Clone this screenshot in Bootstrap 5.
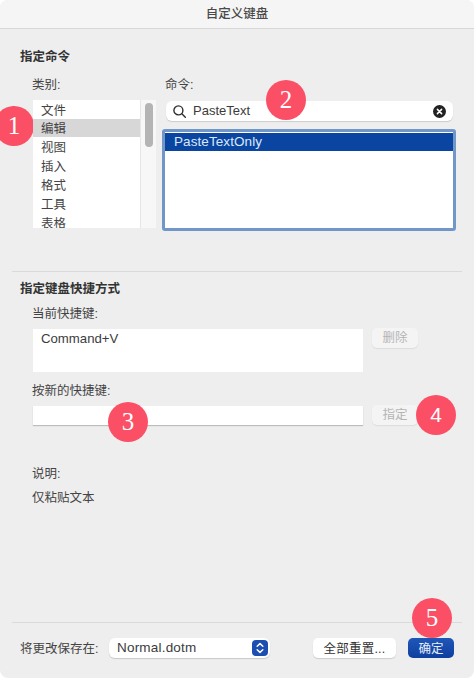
<!DOCTYPE html>
<html lang="zh">
<head>
<meta charset="utf-8">
<title>自定义键盘</title>
<link href="https://cdn.jsdelivr.net/npm/bootstrap@5.3.0/dist/css/bootstrap.min.css" rel="stylesheet">
<style>
html,body{margin:0;height:678px;background:#fff;overflow:hidden}
body{font-family:"Liberation Sans","Noto Sans CJK SC",sans-serif;font-size:12.5px;line-height:18px;color:#3c3c3c}
.sheet{width:474px;height:678px;background:#eee;border-radius:8px;overflow:hidden;-webkit-font-smoothing:antialiased}
.titlebar{height:29px;background:#f5f5f5;border-bottom:1px solid #d8d8d8;line-height:29px;color:#4a4a4a;font-weight:500}
.sec-head{margin:0 0 0 20px;font-size:12.5px;line-height:18px;font-weight:700;color:#333}
.lbl{line-height:18px;color:#444}
.top-head{margin-top:19px}
.cmd-row{padding-left:32px;margin-top:10px;gap:6px}
.cat-col{width:124px}
.cmd-col{width:294px}
.cmd-lbl{padding-left:3px}
.cat-box{margin:6px 0 0 1px;width:123px;height:128px;background:#f7f7f7;overflow:hidden}
.cat-list{width:108px;height:128px;padding-top:1px;overflow:hidden;background:#fff;border-right:1px solid #e6e6e6}
.cat-list .list-group-item{padding:0 0 0 8px;height:19px;line-height:21px;flex:none;border:0;background:transparent;color:#444;font-size:12.5px;overflow:visible}
.cat-list .list-group-item.active{background:linear-gradient(#d7d7d7 18px,transparent 18px);color:#444}
.thumb-track{flex:1;padding:3px 3px 0 4px}
.thumb{height:44px;background:#b4b4b4;border-radius:4px}
.search{margin:7px 3px 0 4px;height:20px;background:#fff;border-radius:6px;box-shadow:0 1px 1px #ccc;padding:0 7px 0 7px;gap:7px}
.search input{border:0;padding:0;background:transparent;font-size:13px;line-height:20px;height:20px;color:#3c3c3c;box-shadow:none}
.cmd-box{margin-top:8px;height:102px;background:#fff;border:3px solid #7197c9;border-radius:3px;padding-top:1px}
.cmd-sel{height:18px;line-height:18px;background:#0a46a1;color:#dce8fa;font-size:13.5px;padding-left:9px;letter-spacing:.08px}
.rule{height:1px;background:#dadada;margin:0 12px}
.rule-a{margin-top:40px}
.second-head{margin-top:8px}
.ind{margin-left:32px}
.lbl-a{margin-top:7px}
.lbl-b{margin-top:10px}
.key-row{margin:6px 0 0 33px;gap:9px}
.key-box{width:330px;height:43px;background:#fff;padding:1px 8px;font-size:13.2px;line-height:18px;color:#3c3c3c}
.key-input{width:330px;height:19px;background:#fff;box-shadow:0 1px 1px #bdbdbd}
.ghost{--bs-btn-disabled-color:#b4b4b4;--bs-btn-disabled-bg:#f4f4f4;--bs-btn-disabled-opacity:1;--bs-btn-disabled-border-color:transparent;width:46px;height:20px;padding:0;margin-top:-1px;font-size:12.5px;line-height:20px;border:0;border-radius:5px;box-shadow:0 1px 1px #dcdcdc}
.desc-a{margin-top:40px}
.desc-b{margin-top:6px}
.foot-row{height:20px;margin:15px 20px 20px 20px}
.foot-lbl{width:89px;color:#444;padding-top:2px}
.sel-fake{width:161px;height:20px;background:#fff;border-radius:6px;box-shadow:0 1px 1px #c8c8c8;padding:0 2px 0 8px;font-size:13.5px;color:#3c3c3c;letter-spacing:.2px}
.stepper{width:16px;height:16px;flex:none;background:#1c4fb0;border-radius:4px}
.reset-btn{width:83px;height:20px;padding:2px 0 0;font-size:12.5px;line-height:18px;background:#fff;border:0;border-radius:5px;color:#333;box-shadow:0 1px 1px #ccc;letter-spacing:.2px}
.ok-btn{width:46px;height:20px;padding:2px 0 0;margin-left:12px;font-size:12.5px;line-height:18px;background:linear-gradient(#1f57b8,#0f3f9f);border:0;border-radius:5px;color:#e6edf9}
.dot{position:absolute;width:40px;height:40px;border-radius:50%;background:#fb4f66;color:#fff;font-family:"Liberation Serif",serif;font-size:25px;line-height:39px;text-align:center}
.dot-1{left:-6px;top:106px}
.dot-2{left:266px;top:80px}
.dot-3{left:108px;top:402px}
.dot-4{left:416px;top:395px;font-family:"Liberation Sans",sans-serif;font-size:21px}
.dot-5{left:412px;top:598px}
</style>
</head>
<body>
<div class="sheet position-relative d-flex flex-column">
  <div class="titlebar text-center">自定义键盘</div>

  <h6 class="sec-head top-head">指定命令</h6>
  <div class="cmd-row d-flex">
    <div class="cat-col">
      <div class="lbl">类别:</div>
      <div class="cat-box d-flex">
        <div class="cat-list list-group list-group-flush rounded-0">
          <div class="list-group-item">文件</div>
          <div class="list-group-item active">编辑</div>
          <div class="list-group-item">视图</div>
          <div class="list-group-item">插入</div>
          <div class="list-group-item">格式</div>
          <div class="list-group-item">工具</div>
          <div class="list-group-item">表格</div>
        </div>
        <div class="thumb-track"><div class="thumb"></div></div>
      </div>
    </div>
    <div class="cmd-col">
      <div class="lbl cmd-lbl">命令:</div>
      <div class="search d-flex align-items-center">
        <svg class="flex-shrink-0" width="13" height="13" viewBox="0 0 13 13" fill="none" stroke="#2e2e2e" stroke-width="1.4" stroke-linecap="round"><circle cx="5.4" cy="5.4" r="4.5"/><path d="M8.8 8.8 12.3 12.3"/></svg>
        <input class="form-control" type="text" value="PasteText" aria-label="命令">
        <svg class="flex-shrink-0" width="13" height="13" viewBox="0 0 13 13"><circle cx="6.5" cy="6.5" r="6.5" fill="#222"/><path d="M4.4 4.4 8.6 8.6M8.6 4.4 4.4 8.6" stroke="#fff" stroke-width="1.5" stroke-linecap="round"/></svg>
      </div>
      <div class="cmd-box"><div class="cmd-sel">PasteTextOnly</div></div>
    </div>
  </div>

  <div class="rule rule-a"></div>
  <h6 class="sec-head second-head">指定键盘快捷方式</h6>
  <div class="lbl ind lbl-a">当前快捷键:</div>
  <div class="key-row d-flex align-items-start">
    <div class="key-box">Command+V</div>
    <button class="btn ghost" type="button" disabled>删除</button>
  </div>
  <div class="lbl ind lbl-b">按新的快捷键:</div>
  <div class="key-row d-flex align-items-start">
    <div class="key-input"></div>
    <button class="btn ghost" type="button" disabled>指定</button>
  </div>
  <div class="lbl ind desc-a">说明:</div>
  <div class="lbl ind desc-b">仅粘贴文本</div>

  <div class="rule mt-auto"></div>
  <div class="foot-row d-flex align-items-center">
    <div class="foot-lbl">将更改保存在:</div>
    <div class="sel-fake d-flex align-items-center justify-content-between">
      <span>Normal.dotm</span>
      <span class="stepper d-flex align-items-center justify-content-center">
        <svg width="8" height="12" viewBox="0 0 8 12" fill="none" stroke="#fff" stroke-width="1.5" stroke-linecap="round" stroke-linejoin="round"><path d="M1.2 4.2 4 1.6 6.8 4.2M1.2 7.8 4 10.4 6.8 7.8"/></svg>
      </span>
    </div>
    <button class="btn reset-btn ms-auto" type="button">全部重置...</button>
    <button class="btn ok-btn" type="button">确定</button>
  </div>

  <span class="dot dot-1">1</span>
  <span class="dot dot-2">2</span>
  <span class="dot dot-3">3</span>
  <span class="dot dot-4">4</span>
  <span class="dot dot-5">5</span>
</div>
<script src="https://cdn.jsdelivr.net/npm/bootstrap@5.3.0/dist/js/bootstrap.bundle.min.js"></script>
</body>
</html>
